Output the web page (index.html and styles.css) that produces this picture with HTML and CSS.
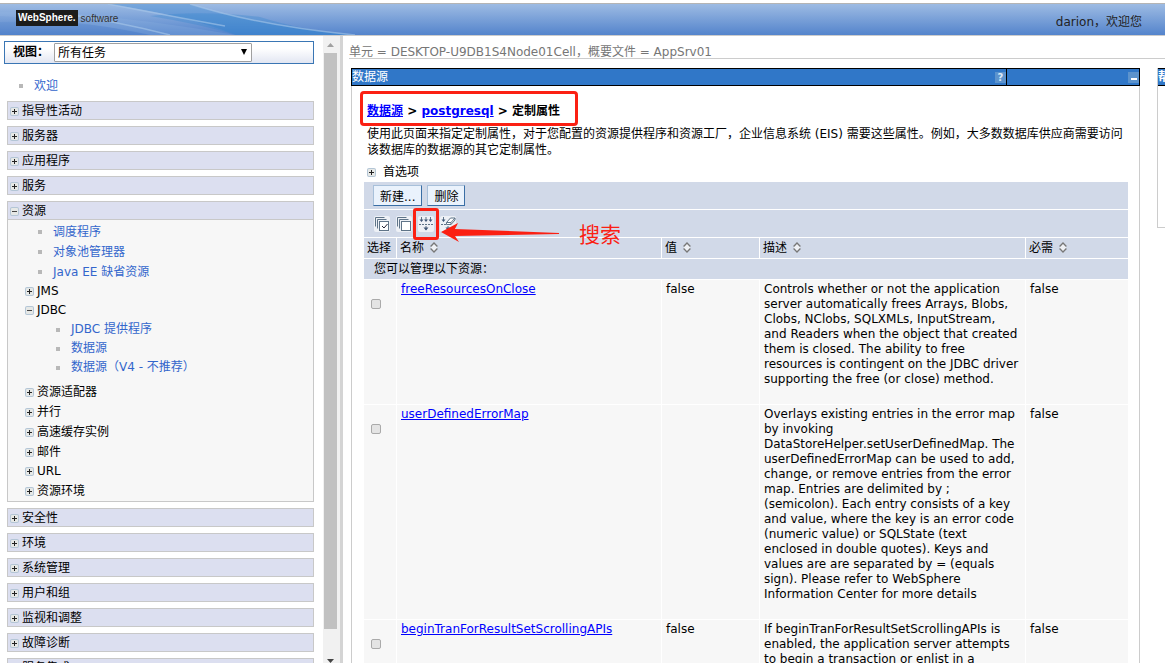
FILE: index.html
```html
<!DOCTYPE html>
<html lang="zh-CN">
<head>
    <meta charset="utf-8">
    <title>WebSphere</title>
    <meta name="viewport" content="width=device-width, initial-scale=1">
    <link rel="stylesheet" href="styles.css">
</head>
<body>
    <!-- shared icons -->
    <svg class="sprite" aria-hidden="true">
        <symbol id="plus" viewBox="0 0 9 9">
            <rect x="0" y="0" width="9" height="9" rx="2" fill="#b4c6d6"/>
            <rect x="1" y="1" width="7" height="7" rx="1" fill="#e6e8e6"/>
            <path d="M2 4.500h5M4.500 2v5" stroke="#222" stroke-width="1"/>
        </symbol>
        <symbol id="minus" viewBox="0 0 9 9">
            <rect x="0" y="0" width="9" height="9" rx="2" fill="#b4c6d6"/>
            <rect x="1" y="1" width="7" height="7" rx="1" fill="#e6e8e6"/>
            <path d="M2 4.500h5" stroke="#444" stroke-width="1"/>
        </symbol>
        <symbol id="sort" viewBox="0 0 8 11">
            <path d="M4 1l3 3.500v2L4 10 1 6.500v-2z" fill="#eef0f4"/>
            <path d="M.6 4.500L4 1l3.400 3.500M.6 6.500L4 10l3.400-3.500" fill="none" stroke="#777" stroke-width="1.300"/>
        </symbol>
    </svg>

    <header class="banner">
        <svg class="banner-art" width="380" height="31" viewBox="0 0 380 31" aria-hidden="true">
            <path d="M0 18Q90 16 150 31H0z" fill="#4a7cc6" opacity=".2"/>
            <path d="M60 8Q150 16 236 31H150Q80 16 0 12V8z" fill="#9dbfe6" opacity=".2"/>
            <path d="M108 0h82Q260 22 355 31H236Q190 12 108 0z" fill="#3182ce" opacity=".35"/>
            <path d="M150 12Q200 6 260 13Q300 26 355 31H236Q200 20 150 12z" fill="#2f86cc" opacity=".3"/>
            <path d="M60 9Q120 18 170 31M108 0Q170 12 225 22M190 0Q260 22 355 31" fill="none" stroke="#a9c8ea" stroke-width="1.500" opacity=".6"/>
        </svg>
        <div class="logo"><span class="logo-mark">WebSphere.</span><span class="logo-text">software</span></div>
        <div class="welcome">darion，欢迎您</div>
    </header>

    <div class="frames">
        <nav class="nav">
            <div class="view-box">
                <label for="view">视图：</label>
                <div class="select-wrap">
                    <select id="view"><option>所有任务</option></select>
                    <svg class="select-arrow" width="6" height="6" viewBox="0 0 6 6"><path d="M0 0h6L3 6z"/></svg>
                </div>
            </div>
            <div class="nav-welcome"><a class="leaf" href="#">欢迎</a></div>

            <div class="task"><svg class="tw"><use href="#plus"/></svg>指导性活动</div>
            <div class="task"><svg class="tw"><use href="#plus"/></svg>服务器</div>
            <div class="task"><svg class="tw"><use href="#plus"/></svg>应用程序</div>
            <div class="task"><svg class="tw"><use href="#plus"/></svg>服务</div>
            <div class="task open"><svg class="tw"><use href="#minus"/></svg>资源</div>
            <div class="task-body">
                <a class="leaf" href="#">调度程序</a>
                <a class="leaf" href="#">对象池管理器</a>
                <a class="leaf" href="#">Java EE 缺省资源</a>
                <div class="group latin"><svg class="tw"><use href="#plus"/></svg>JMS</div>
                <div class="group latin"><svg class="tw"><use href="#minus"/></svg>JDBC</div>
                <div class="sub">
                    <a class="leaf" href="#">JDBC 提供程序</a>
                    <a class="leaf" href="#">数据源</a>
                    <a class="leaf" href="#">数据源（V4 - 不推荐）</a>
                </div>
                <div class="group"><svg class="tw"><use href="#plus"/></svg>资源适配器</div>
                <div class="group"><svg class="tw"><use href="#plus"/></svg>并行</div>
                <div class="group"><svg class="tw"><use href="#plus"/></svg>高速缓存实例</div>
                <div class="group"><svg class="tw"><use href="#plus"/></svg>邮件</div>
                <div class="group latin"><svg class="tw"><use href="#plus"/></svg>URL</div>
                <div class="group"><svg class="tw"><use href="#plus"/></svg>资源环境</div>
            </div>
            <div class="task"><svg class="tw"><use href="#plus"/></svg>安全性</div>
            <div class="task"><svg class="tw"><use href="#plus"/></svg>环境</div>
            <div class="task"><svg class="tw"><use href="#plus"/></svg>系统管理</div>
            <div class="task"><svg class="tw"><use href="#plus"/></svg>用户和组</div>
            <div class="task"><svg class="tw"><use href="#plus"/></svg>监视和调整</div>
            <div class="task"><svg class="tw"><use href="#plus"/></svg>故障诊断</div>
            <div class="task"><svg class="tw"><use href="#plus"/></svg>服务集成</div>
        </nav>

        <div class="scrollbar" aria-hidden="true">
            <svg width="7" height="4" viewBox="0 0 7 4"><path d="M0 4L3.500 0 7 4z" fill="#a0a0a0"/></svg>
            <div class="thumb"></div>
            <svg width="7" height="4" viewBox="0 0 7 4"><path d="M0 0h7L3.500 4z" fill="#444"/></svg>
        </div>

        <main class="main">
            <div class="cell-info">单元 = DESKTOP-U9DB1S4Node01Cell，概要文件 = AppSrv01</div>
            <div class="columns">
                <section class="portlet">
                    <div class="portlet-title">
                        <h2>数据源</h2>
                        <button class="title-btn" aria-label="帮助">?</button>
                        <div class="title-right"><button class="title-btn" aria-label="最小化"><svg width="11" height="11" viewBox="0 0 11 11"><path d="M3 7h6" stroke="#fff" stroke-width="2"/></svg></button></div>
                    </div>
                    <div class="portlet-body">
                        <h1 class="crumbs"><a href="#">数据源</a> &gt; <a href="#">postgresql</a> &gt; 定制属性</h1>
                        <p class="intro">使用此页面来指定定制属性，对于您配置的资源提供程序和资源工厂，企业信息系统 (EIS) 需要这些属性。例如，大多数数据库供应商需要访问该数据库的数据源的其它定制属性。</p>
                        <div class="prefs"><svg class="tw"><use href="#plus"/></svg>首选项</div>

                        <div class="bar">
                            <button class="btn">新建...</button>
                            <button class="btn">删除</button>
                        </div>
                        <div class="bar icons">
                            <button class="icon-btn" aria-label="全选">
                                <svg viewBox="0 0 16 16"><path d="M1.500 10.500v-9h9M3.500 12.500v-9h9" class="ln"/><rect x="5.500" y="5.500" width="9" height="9" class="pg"/><path d="M8 10l2 2 3.500-4" class="ln dark"/></svg>
                            </button>
                            <button class="icon-btn" aria-label="取消全选">
                                <svg viewBox="0 0 16 16"><path d="M1.500 10.500v-9h9M3.500 12.500v-9h9" class="ln"/><rect x="5.500" y="5.500" width="9" height="9" class="pg"/></svg>
                            </button>
                            <button class="icon-btn marked" aria-label="显示过滤器">
                                <svg viewBox="0 0 16 16"><path d="M3.500 1v4M8 1v4M12.500 1v4M8 10v4" class="ln"/><path d="M1.500 3.500h4L3.500 6zM6 3.500h4L8 6zM10.500 3.500h4l-2 2.500zM5.500 11.500h5L8 14.500z" fill="#405878"/><path d="M1 8.500h14" class="ln dash"/></svg>
                            </button>
                            <button class="icon-btn" aria-label="清除过滤器">
                                <svg viewBox="0 0 16 16"><path d="M3.500 1v4M8 10v4" class="ln"/><path d="M1.500 3.500h4L3.500 6zM5.500 11.500h5L8 14.500z" fill="#405878"/><path d="M1 8.500h5" class="ln dash"/><path d="M6.500 6.500l4-4.500h4.500v2l-4 4.500H6.500zM6.500 6.500h4.500v2M11 6.500L15 2" class="pg"/></svg>
                            </button>
                            <svg class="arrow" width="118" height="19" viewBox="0 0 118 19"><path d="M0 9L17 0l-3 6 104 4v1L14 13l4 6z"/></svg>
                            <span class="note">搜索</span>
                        </div>

                        <table class="props">
                            <colgroup><col class="c-sel"><col><col class="c-val"><col class="c-desc"><col class="c-req"></colgroup>
                            <thead>
                                <tr>
                                    <th>选择</th>
                                    <th>名称 <svg class="sort"><use href="#sort"/></svg></th>
                                    <th>值 <svg class="sort"><use href="#sort"/></svg></th>
                                    <th>描述 <svg class="sort"><use href="#sort"/></svg></th>
                                    <th>必需 <svg class="sort"><use href="#sort"/></svg></th>
                                </tr>
                                <tr><th colspan="5" class="manage">您可以管理以下资源：</th></tr>
                            </thead>
                            <tbody>
                                <tr>
                                    <td><input type="checkbox" aria-label="freeResourcesOnClose"></td>
                                    <td><a href="#">freeResourcesOnClose</a></td>
                                    <td>false</td>
                                    <td>Controls whether or not the application server automatically frees Arrays, Blobs, Clobs, NClobs, SQLXMLs, InputStream, and Readers when the object that created them is closed. The ability to free resources is contingent on the JDBC driver supporting the free (or close) method.</td>
                                    <td>false</td>
                                </tr>
                                <tr>
                                    <td><input type="checkbox" aria-label="userDefinedErrorMap"></td>
                                    <td><a href="#">userDefinedErrorMap</a></td>
                                    <td></td>
                                    <td>Overlays existing entries in the error map by invoking DataStoreHelper.setUserDefinedMap. The userDefinedErrorMap can be used to add, change, or remove entries from the error map. Entries are delimited by ; (semicolon). Each entry consists of a key and value, where the key is an error code (numeric value) or SQLState (text enclosed in double quotes). Keys and values are are separated by = (equals sign). Please refer to WebSphere Information Center for more details</td>
                                    <td>false</td>
                                </tr>
                                <tr>
                                    <td><input type="checkbox" aria-label="beginTranForResultSetScrollingAPIs"></td>
                                    <td><a href="#">beginTranForResultSetScrollingAPIs</a></td>
                                    <td>false</td>
                                    <td>If beginTranForResultSetScrollingAPIs is enabled, the application server attempts to begin a transaction or enlist in a</td>
                                    <td>false</td>
                                </tr>
                            </tbody>
                        </table>
                    </div>
                </section>
                <aside class="help">
                    <div class="help-title">帮助</div>
                </aside>
            </div>
        </main>
    </div>
</body>
</html>
```
FILE: styles.css
```css
* {
    box-sizing: border-box;
}
body {
    margin: 0;
    height: 100vh;
    display: flex;
    flex-direction: column;
    overflow: hidden;
    background: #fff;
    color: #000;
    font-family: "DejaVu Sans", "Noto Sans CJK SC", sans-serif;
    font-size: 12px;
    line-height: 15px;
}
button, select, input {
    font-family: inherit;
    font-size: 12px;
    margin: 0;
    padding: 0;
}
.sprite {
    position: absolute;
    width: 0;
    height: 0;
}

/* banner */
.banner {
    position: relative;
    flex: none;
    margin-top: 3px;
    height: 33px;
    border-top: 1px solid #b4b4b4;
    border-bottom: 1px solid #ccc;
    background: linear-gradient(#9dbbe3, #5484cc);
    display: flex;
    justify-content: space-between;
}
.banner-art {
    position: absolute;
    left: 0;
    top: 0;
}
.logo {
    position: relative;
    display: flex;
    align-items: center;
    gap: 3px;
    height: 16px;
    margin: 6px 0 0 16px;
    font-family: "Liberation Sans", sans-serif;
    font-size: 10px;
}
.logo-mark {
    background: #1c1c1c;
    color: #fff;
    font-weight: bold;
    line-height: 16px;
    padding: 0 2px;
}
.logo-text {
    color: #333;
}
.welcome {
    padding: 11px 23px 0 0;
    color: #222;
}

.frames {
    flex: 1;
    min-height: 0;
    display: flex;
}

/* left navigation */
.nav {
    width: 323px;
    padding: 5px 9px 0 4px;
    overflow: hidden;
}
.view-box {
    height: 23px;
    display: flex;
    align-items: center;
    border: 1px solid #3a76b4;
    background: linear-gradient(#fff 30%, #e2e6f2);
}
.view-box label {
    width: 49px;
    padding-left: 8px;
    font-weight: bold;
    white-space: nowrap;
}
.select-wrap {
    position: relative;
    width: 198px;
}
.select-wrap select {
    display: block;
    width: 100%;
    height: 19px;
    padding-left: 3px;
    appearance: none;
    background: #fff;
    border: 1px solid #a0a0a0;
    border-radius: 1px;
    color: #000;
}
.select-arrow {
    position: absolute;
    right: 5px;
    top: 6px;
}
.nav-welcome {
    margin: 12px 0 5px 15px;
}
.leaf {
    display: flex;
    align-items: center;
    height: 20px;
    color: #36c;
    text-decoration: none;
}
.leaf::before {
    content: "";
    width: 4px;
    height: 4px;
    margin-right: 11px;
    background: #b8b8b8;
}
.tw {
    width: 9px;
    height: 9px;
    flex: none;
    margin-right: 3px;
}
.task {
    height: 19px;
    margin: 0 0 6px 3px;
    padding: 1px 0 0 2px;
    display: flex;
    align-items: center;
    border: 1px solid #c8c8c8;
    background: #dcdff0;
}
.task.open {
    margin-bottom: 0;
}
.task-body {
    margin: 0 0 6px 3px;
    padding: 2px 0 0 17px;
    border: 1px solid #c8c8c8;
    border-top: none;
    background: #f7f7f7;
}
.task-body .leaf {
    padding-left: 13px;
}
.group {
    display: flex;
    align-items: center;
    height: 20px;
}
.group.latin {
    height: 19px;
}
.sub {
    margin-bottom: 5px;
    padding-left: 18px;
}
.sub .leaf {
    height: 19px;
}
.scrollbar {
    width: 20px;
    display: flex;
    flex-direction: column;
    align-items: center;
    padding: 7px 2px 0 0;
    background: #f1f1f1;
    border-right: 3px solid #d4d4d4;
}
.thumb {
    width: 13px;
    flex: 1;
    margin: 6px 0 30px;
    background: #c1c1c1;
}

/* main area */
.main {
    flex: 1;
    min-width: 0;
    padding: 7px 0 0 6px;
}
.cell-info {
    height: 16px;
    line-height: 18px;
    border-bottom: 1px solid #ccc;
    color: #767676;
}
.columns {
    display: flex;
    align-items: flex-start;
    padding: 9px 0 0 2px;
}
.portlet {
    flex: 1;
    min-width: 0;
}
.portlet-title {
    height: 18px;
    display: flex;
    align-items: center;
    border: 1px solid #000;
    background: #3077c8;
}
.portlet-title h2 {
    flex: 1;
    margin: 0;
    color: #fff;
    font-size: 12px;
    font-weight: normal;
    line-height: 16px;
}
.title-right {
    width: 133px;
    height: 16px;
    display: flex;
    justify-content: flex-end;
    align-items: center;
    border-left: 1px solid #000;
}
.title-btn {
    width: 11px;
    height: 11px;
    display: flex;
    align-items: center;
    justify-content: center;
    border: none;
    background: #5c93cd;
    color: #dce9f7;
    font-size: 10px;
    font-weight: bold;
    line-height: 11px;
}
.portlet-body {
    padding: 5px 11px 0 12px;
    border: 1px solid #ccc;
    border-top: none;
}
.crumbs {
    width: 218px;
    height: 35px;
    margin: 0 0 0 -4px;
    padding-left: 4px;
    border: 3px solid #fb2013;
    border-radius: 4px;
    font-size: 12px;
    line-height: 34px;
    white-space: nowrap;
}
a {
    color: #00f;
}
.intro {
    margin: 0;
    padding-left: 3px;
    line-height: 16px;
}
.prefs {
    display: flex;
    align-items: center;
    height: 24px;
    padding: 4px 0 0 3px;
}
.prefs .tw {
    margin-right: 7px;
}
.bar {
    position: relative;
    height: 28px;
    display: flex;
    align-items: center;
    gap: 5px;
    padding-left: 9px;
    border-bottom: 1px solid #fff;
    background: #d1d9e8;
}
.btn {
    height: 21px;
    padding: 0 6px;
    border: 1px solid #6a8fb8;
    border-color: #a8c0da #3a6ea5 #3a6ea5 #a8c0da;
    background: #eaf2fc;
    color: #000;
}
.icons {
    gap: 6px;
    padding-left: 10px;
}
.icon-btn {
    position: relative;
    width: 16px;
    height: 16px;
    border: none;
    border-radius: 2px;
    background: #eef1f6;
}
.icon-btn svg {
    display: block;
    width: 16px;
    height: 16px;
}
.ln {
    fill: none;
    stroke: #5f7488;
}
.ln.dark {
    stroke: #223;
}
.ln.dash {
    stroke-dasharray: 2 1;
}
.pg {
    fill: #fff;
    stroke: #5f7488;
}
.marked::after {
    content: "";
    position: absolute;
    inset: -8px -5px;
    border: 3px solid #fb2013;
    border-radius: 3px;
}
.arrow {
    position: absolute;
    left: 77px;
    top: 13px;
    fill: #fb2013;
}
.note {
    position: absolute;
    left: 215px;
    top: 12px;
    color: #fb2013;
    font-size: 21px;
    line-height: 26px;
}

/* properties table */
.props {
    width: 100%;
    table-layout: fixed;
    border-collapse: separate;
    border-spacing: 0;
}
.c-sel { width: 33px; }
.c-val { width: 98px; }
.c-desc { width: 266px; }
.c-req { width: 102px; }
.props th,
.props td {
    border: solid #fff;
    border-width: 0 1px 1px 0;
    text-align: left;
    font-weight: normal;
}
.props th:last-child,
.props td:last-child {
    border-right: none;
}
.props th {
    height: 21px;
    padding: 0 3px;
    background: #d1d9e8;
}
.props th.manage {
    padding-left: 10px;
}
.props td {
    padding: 2px 4px 17px;
    vertical-align: top;
    background: #f7f7f7;
}
.sort {
    width: 8px;
    height: 11px;
    margin-left: 2px;
    vertical-align: -1px;
}
.props input {
    display: block;
    appearance: none;
    width: 10px;
    height: 10px;
    margin: 17px 0 0 3px;
    border: 1px solid #aaa;
    border-radius: 2px;
    background: #e4e4e4;
}

/* help column, runs off the right edge */
.help {
    width: 8px;
    height: 160px;
    margin-left: 17px;
    overflow: hidden;
    border: 1px solid #ccc;
    border-width: 0 0 1px 1px;
}
.help-title {
    height: 18px;
    margin-left: -1px;
    border: 1px solid #000;
    border-right: none;
    background: #3077c8;
    color: #fff;
    font-weight: bold;
    line-height: 16px;
    white-space: nowrap;
}
```
